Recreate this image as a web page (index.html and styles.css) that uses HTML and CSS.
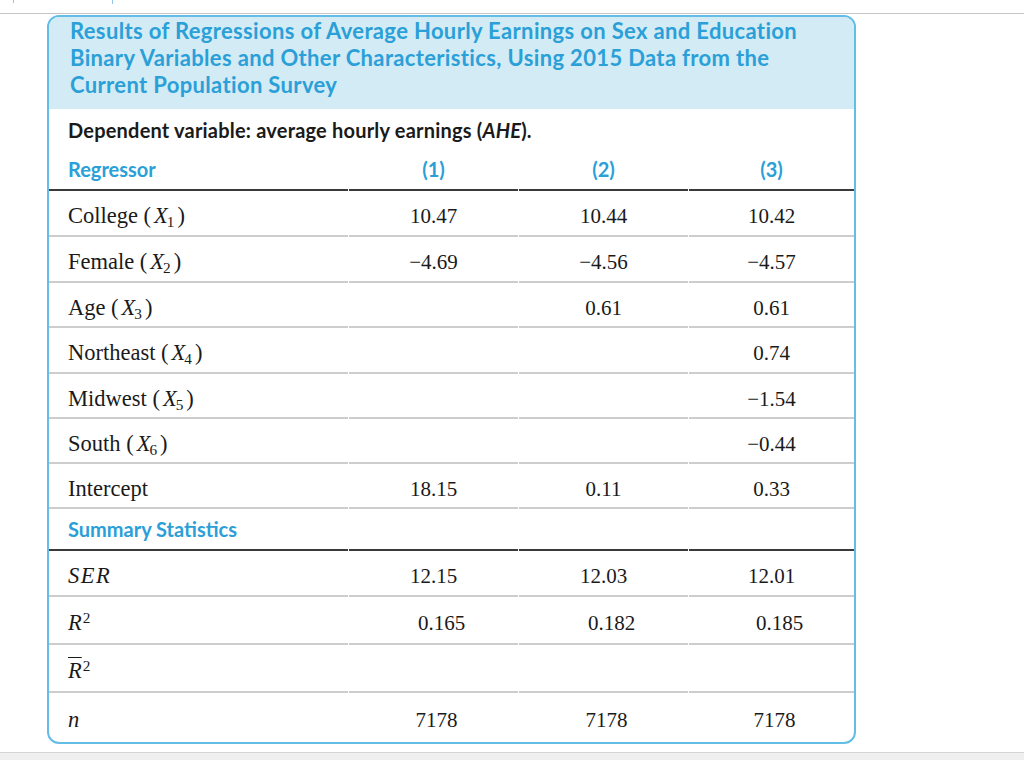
FILE: index.html
```html
<!DOCTYPE html>
<html lang="en">
<head>
<meta charset="utf-8">
<title>Regression results</title>
<link rel="stylesheet" href="styles.css">
</head>
<body>
<div class="topbar"><span class="mark mark-a"></span><span class="mark mark-b"></span></div>
<main class="page">
  <section class="card">
    <header class="card-head">
      <h1 class="card-title">Results of Regressions of Average Hourly Earnings on Sex and Education<br>Binary Variables and Other Characteristics, Using 2015 Data from the<br>Current Population Survey</h1>
    </header>
    <p class="dep">Dependent variable: average hourly earnings (<i>AHE</i>).</p>
    <div class="grid">
      <div class="row head"><div class="c lab">Regressor</div><div class="c">(1)</div><div class="c">(2)</div><div class="c">(3)</div></div>
      <div class="row"><div class="c lab"><span>College (<i class="x">X</i><sub>1</sub>)</span></div><div class="c">10.47</div><div class="c">10.44</div><div class="c">10.42</div></div>
      <div class="row"><div class="c lab"><span>Female (<i class="x">X</i><sub>2</sub>)</span></div><div class="c">−4.69</div><div class="c">−4.56</div><div class="c">−4.57</div></div>
      <div class="row"><div class="c lab"><span>Age (<i class="x">X</i><sub>3</sub>)</span></div><div class="c"></div><div class="c">0.61</div><div class="c">0.61</div></div>
      <div class="row"><div class="c lab"><span>Northeast (<i class="x">X</i><sub>4</sub>)</span></div><div class="c"></div><div class="c"></div><div class="c">0.74</div></div>
      <div class="row"><div class="c lab"><span>Midwest (<i class="x">X</i><sub>5</sub>)</span></div><div class="c"></div><div class="c"></div><div class="c">−1.54</div></div>
      <div class="row"><div class="c lab"><span>South (<i class="x">X</i><sub>6</sub>)</span></div><div class="c"></div><div class="c"></div><div class="c">−0.44</div></div>
      <div class="row"><div class="c lab"><span>Intercept</span></div><div class="c">18.15</div><div class="c">0.11</div><div class="c">0.33</div></div>
      <div class="row sec"><div class="c lab">Summary Statistics</div><div class="c"></div><div class="c"></div><div class="c"></div></div>
      <div class="row"><div class="c lab"><span><i class="ser">SER</i></span></div><div class="c">12.15</div><div class="c">12.03</div><div class="c">12.01</div></div>
      <div class="row"><div class="c lab"><span><i>R</i><sup>2</sup></span></div><div class="c d3">0.165</div><div class="c d3">0.182</div><div class="c d3">0.185</div></div>
      <div class="row"><div class="c lab"><span><i class="bar">R</i><sup>2</sup></span></div><div class="c"></div><div class="c"></div><div class="c"></div></div>
      <div class="row last"><div class="c lab"><span><i>n</i></span></div><div class="c d4">7178</div><div class="c d4">7178</div><div class="c d4">7178</div></div>
    </div>
  </section>
</main>
<div class="band"></div>
</body>
</html>
```

FILE: styles.css
```css
html, body {
  margin: 0;
  padding: 0;
  background: #ffffff;
  overflow: hidden;
}

body {
  width: 1024px;
  height: 760px;
  font-family: "Liberation Serif", "Times New Roman", serif;
  color: #1d1d1d;
}

.topbar {
  height: 13px;
  border-bottom: 1px solid #c6c6c6;
  display: flex;
  align-items: flex-start;
}

.mark {
  display: block;
  width: 1px;
  height: 3px;
  background: #8fc6e4;
}

.mark-a { margin-left: 13px; }
.mark-b { margin-left: 98px; height: 4px; }

.page {
  padding: 1px 0 0 47px;
  height: 737px;
}

.card {
  width: 809px;
  height: 729px;
  box-sizing: border-box;
  border: 2px solid #62bde7;
  border-radius: 12px;
  overflow: hidden;
  background: #ffffff;
}

.card-head {
  background: #d2ebf4;
  height: 92px;
  box-sizing: border-box;
  padding: 0 0 0 21px;
}

.card-title {
  margin: 0;
  font-family: Lato, "Open Sans", sans-serif;
  font-weight: 700;
  font-size: 22px;
  letter-spacing: 0.35px;
  line-height: 27px;
  color: #2b9fd8;
}

.dep {
  margin: 0;
  padding: 10px 0 0 19px;
  font-family: Lato, "Open Sans", sans-serif;
  font-weight: 700;
  font-size: 20px;
  letter-spacing: 0.2px;
  line-height: 22px;
  color: #1a1a1a;
}

.grid {
  display: grid;
  grid-template-columns: 299px 170px 170px 1fr;
  grid-template-rows: 50px 46px 46px 45px 46px 45px 45px 45px 42px 46px 48px 48px 48px;
}

.row {
  display: contents;
}

.c {
  box-sizing: border-box;
  border-bottom: 2px solid #cdcdcd;
  display: flex;
  align-items: center;
  justify-content: center;
  padding-top: 6px;
  font-size: 21px;
  line-height: 22px;
  white-space: nowrap;
  color: #1a1a1a;
}

.c + .c {
  margin-left: 1px;
}

.c.lab {
  justify-content: flex-start;
  padding-left: 19px;
  font-size: 22.5px;
}

.head .c,
.sec .c {
  font-family: Lato, "Open Sans", sans-serif;
  font-weight: 700;
  font-size: 20px;
  color: #2b9fd8;
  border-bottom-color: #3a3a3a;
}

.head .c {
  align-items: flex-end;
  padding-top: 0;
  padding-bottom: 9px;
}

.sec .c {
  padding-top: 0;
}

.last .c {
  border-bottom: none;
}

.d3 { padding-left: 16px; }
.d4 { padding-left: 6px; }

.x {
  margin-left: 3px;
}

.ser {
  letter-spacing: 1.5px;
}

sub {
  font-size: 0.68em;
  line-height: 0;
  vertical-align: -0.28em;
  margin-left: -1px;
  margin-right: 3px;
}

sup {
  font-size: 0.68em;
  line-height: 0;
  vertical-align: 0.48em;
  margin-left: 1px;
}

.bar {
  text-decoration: overline;
  text-decoration-thickness: 1px;
}

.band {
  height: 7px;
  border-top: 1px solid #d4d4d4;
  background: #efefef;
}
```
